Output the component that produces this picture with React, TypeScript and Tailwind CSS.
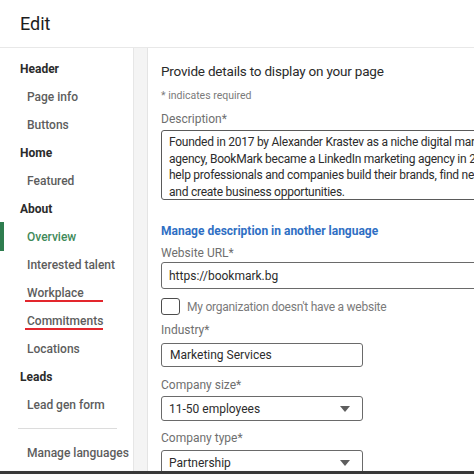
import React from 'react';

type NavItem = { label: string; kind: 'head' | 'item'; active?: boolean; marked?: boolean };

const nav: NavItem[] = [
  { label: 'Header', kind: 'head' },
  { label: 'Page info', kind: 'item' },
  { label: 'Buttons', kind: 'item' },
  { label: 'Home', kind: 'head' },
  { label: 'Featured', kind: 'item' },
  { label: 'About', kind: 'head' },
  { label: 'Overview', kind: 'item', active: true },
  { label: 'Interested talent', kind: 'item' },
  { label: 'Workplace', kind: 'item', marked: true },
  { label: 'Commitments', kind: 'item', marked: true },
  { label: 'Locations', kind: 'item' },
  { label: 'Leads', kind: 'head' },
  { label: 'Lead gen form', kind: 'item' },
];

function Caret() {
  return (
    <svg width="10" height="6" viewBox="0 0 10 6" className="mr-[12px]">
      <path d="M0 0h10L5 6z" fill="#5e5e5e" />
    </svg>
  );
}

function Label({ children, className = '' }: { children: React.ReactNode; className?: string }) {
  return <div className={`text-[12px] leading-[16px] text-[#6f6f6f] ${className}`}>{children}</div>;
}

export default function App() {
  return (
    <div
      className="w-[474px] h-[474px] overflow-hidden bg-white flex flex-col"
      style={{ fontFamily: 'Roboto, "Liberation Sans", Arial, sans-serif' }}
    >
      <div className="h-[48px] shrink-0 border-b border-[#e8e8e8] flex items-center px-5 text-[18px] text-[#1d1d1d]">
        Edit
      </div>

      <div className="flex flex-1 min-h-0">
        <aside className="w-[134px] shrink-0 border-r border-[#e6e6e6] pt-[7px]">
          {nav.map((n) => (
            <div key={n.label} className="relative h-[28px] flex items-center">
              {n.active && <div className="absolute left-0 top-[-1px] w-[4px] h-[29px] bg-[#2e7d4f]" />}
              <span
                className={
                  n.kind === 'head'
                    ? 'pl-[20px] text-[12px] font-bold text-[#2b2b2b]'
                    : `relative pl-[27px] text-[12px] font-medium ${n.active ? 'text-[#3f8a5a]' : 'text-[#5d5d5d]'}`
                }
              >
                {n.label}
                {n.marked && (
                  <span className="absolute left-[25px] top-[16px] w-[78px] h-[2px] bg-[#e3262d]" />
                )}
              </span>
            </div>
          ))}
          <div className="mt-[9px] ml-[18px] w-[99px] border-t border-[#dcdcdc]" />
          <div className="mt-[10px] h-[28px] flex items-center pl-[27px] text-[12px] font-medium text-[#5d5d5d] whitespace-nowrap">
            Manage languages
          </div>
        </aside>

        <div className="w-[14px] shrink-0 bg-[#f4f4f4] border-r border-[#e4e4e4]" />

        <main className="flex-1 min-w-0 overflow-hidden pl-[13px]">
          <div className="mt-[13px] text-[13.5px] leading-[20px] tracking-[-0.2px] text-[#2a2a2a] whitespace-nowrap">
            Provide details to display on your page
          </div>
          <div className="mt-[8px] text-[10.5px] leading-[14px] text-[#7a7a7a]">* indicates required</div>
          <Label className="mt-[8px]">Description*</Label>
          <div className="mt-[3px] w-[340px] h-[70px] border border-[#5a5a5a] rounded-[3px] pl-[7px] pt-[3px] text-[12px] leading-[16.5px] tracking-[-0.25px] text-[#2c2c2c] overflow-hidden">
            <div className="whitespace-nowrap">Founded in 2017 by Alexander Krastev as a niche digital mar</div>
            <div className="whitespace-nowrap">agency, BookMark became a LinkedIn marketing agency in 2</div>
            <div className="whitespace-nowrap">help professionals and companies build their brands, find ne</div>
            <div className="whitespace-nowrap">and create business opportunities.</div>
          </div>

          <div className="mt-[22px] text-[12px] leading-[18px] font-bold text-[#2f6fc4] whitespace-nowrap">
            Manage description in another language
          </div>

          <Label className="mt-[5px]">Website URL*</Label>
          <div className="mt-[1px] w-[340px] h-[27px] border border-[#6a6a6a] rounded-[3px] px-[7px] flex items-center text-[12px] text-[#2c2c2c]">
            https://bookmark.bg
          </div>

          <div className="mt-[9px] h-[17px] flex items-center">
            <div className="w-[19px] h-[17px] border-[1.5px] border-[#4d4d4d] rounded-[3px]" />
            <span className="ml-[7px] text-[12px] tracking-[-0.25px] text-[#7a7a7a] whitespace-nowrap">
              My organization doesn't have a website
            </span>
          </div>

          <Label className="mt-[7px]">Industry*</Label>
          <div className="mt-[5px] w-[202px] h-[24px] border border-[#6a6a6a] rounded-[3px] px-[8px] flex items-center text-[12px] text-[#2c2c2c]">
            Marketing Services
          </div>

          <Label className="mt-[10px]">Company size*</Label>
          <div className="mt-[3px] w-[202px] h-[25px] border border-[#6a6a6a] rounded-[3px] pl-[7px] flex items-center justify-between text-[12px] text-[#2c2c2c]">
            <span>11-50 employees</span>
            <Caret />
          </div>

          <Label className="mt-[9px]">Company type*</Label>
          <div className="mt-[4px] w-[202px] h-[25px] border border-[#6a6a6a] rounded-[3px] pl-[7px] flex items-center justify-between text-[12px] text-[#2c2c2c]">
            <span>Partnership</span>
            <Caret />
          </div>
        </main>
      </div>

      <div className="h-[3px] shrink-0 bg-[#3a3a3a]" />
    </div>
  );
}
